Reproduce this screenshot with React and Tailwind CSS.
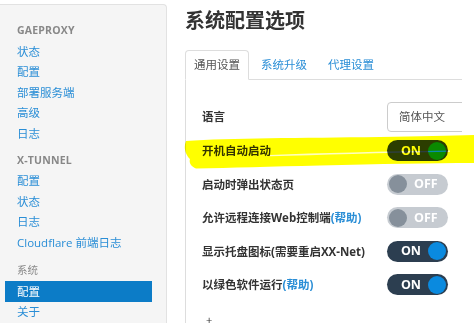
import React from "react";

const FONT = { fontFamily: '"Open Sans", "Noto Sans CJK SC", sans-serif' };

function SideItem({ children, active }) {
  return (
    <div
      className={
        "h-[20.5px] mx-[5px] w-[147px] px-[12px] flex items-center text-[11.5px] " +
        (active ? "bg-[#0c7cc7] text-white" : "text-[#2a8ed6]")
      }
    >
      {children}
    </div>
  );
}

function Toggle({ on }) {
  if (on) {
    return (
      <div className="w-[61px] h-[21px] shrink-0 rounded-full bg-[#2c3e50] flex items-center justify-end pr-[2px] gap-[7px]">
        <span className="text-white font-bold text-[12.5px] leading-none">ON</span>
        <span className="w-[18px] h-[18px] rounded-full bg-[#0a8adf]" />
      </div>
    );
  }
  return (
    <div className="w-[61px] h-[21px] shrink-0 rounded-full bg-[#c6cbd1] flex items-center pl-[2px] gap-[7px]">
      <span className="w-[18px] h-[18px] rounded-full bg-[#86909b]" />
      <span className="text-white font-bold text-[12.5px] leading-none">OFF</span>
    </div>
  );
}

function Row({ label, children, h = "h-[33.5px]" }) {
  return (
    <div className={"flex items-center " + h}>
      <div className="w-[185px] shrink-0 text-[11.5px] font-bold text-[#333]">{label}</div>
      {children}
    </div>
  );
}

const Help = () => <span className="text-[#2a8ed6]">(帮助)</span>;

export default function App() {
  return (
    <div
      className="relative flex w-[474px] h-[323px] overflow-hidden bg-white"
      style={FONT}
    >
      <aside className="w-[167px] shrink-0 mt-[4px] bg-[#f5f5f5] border-t border-r border-[#e2e2e2] rounded-tr-[4px] pt-[16px]">
        <div className="h-[20px] flex items-center pl-[17px] text-[10.5px] font-bold text-[#888] tracking-[0.2px]">
          GAEPROXY
        </div>
        <SideItem>状态</SideItem>
        <SideItem>配置</SideItem>
        <SideItem>部署服务端</SideItem>
        <SideItem>高级</SideItem>
        <SideItem>日志</SideItem>
        <div className="mt-[7px] h-[20px] flex items-center pl-[17px] text-[10.5px] font-bold text-[#888] tracking-[0.2px]">
          X-TUNNEL
        </div>
        <SideItem>配置</SideItem>
        <SideItem>状态</SideItem>
        <SideItem>日志</SideItem>
        <SideItem>Cloudflare 前端日志</SideItem>
        <div className="mt-[8.5px] h-[20px] flex items-center pl-[17px] text-[10.5px] text-[#888]">
          系统
        </div>
        <SideItem active>配置</SideItem>
        <SideItem>关于</SideItem>
      </aside>

      <main className="w-[295px] shrink-0 pl-[18px] pt-[9px] overflow-hidden">
        <h1 className="text-[20px] leading-[24px] font-bold text-[#333]">系统配置选项</h1>
        <div className="mt-[17px] flex h-[30px] border-b border-[#ddd] text-[11.5px]">
          <div className="h-[30px] px-[8px] flex items-center border border-[#ddd] border-b-white rounded-t-[4px] bg-white text-[#555] mr-[2px]">
            通用设置
          </div>
          <div className="h-[29px] px-[10px] flex items-center text-[#2a8ed6]">系统升级</div>
          <div className="h-[29px] px-[11px] flex items-center text-[#2a8ed6]">代理设置</div>
        </div>
        <div className="border-l border-[#ddd] pl-[16px] pt-[20px] h-[260px]">
          <Row label="语言" h="h-[34px]">
            <div className="w-[120px] h-[30px] shrink-0 border border-[#ccc] rounded-[4px] flex items-center pl-[11px] text-[11.5px] text-[#555]">
              简体中文
            </div>
          </Row>
          <Row label="开机自动启动">
            <Toggle on />
          </Row>
          <Row label="启动时弹出状态页">
            <Toggle />
          </Row>
          <Row label={<>允许远程连接Web控制端<Help /></>}>
            <Toggle />
          </Row>
          <Row label="显示托盘图标(需要重启XX-Net)">
            <Toggle on />
          </Row>
          <Row label={<>以绿色软件运行<Help /></>}>
            <Toggle on />
          </Row>
          <div className="h-[20px] pl-[4px] pt-[12px] text-[11px] text-[#333] leading-none">+</div>
        </div>
      </main>

      <svg
        className="absolute left-0 top-0 pointer-events-none mix-blend-multiply"
        width="474"
        height="323"
        viewBox="0 0 474 323"
      >
        <path
          d="M186 141 C 230 138, 300 138, 380 137 C 420 136, 450 136, 474 135 L 474 163 C 430 163, 380 164, 320 165.5 C 270 166.5, 230 168, 196 168.5 C 190 166, 189 162, 190 159 C 186 155, 183 148, 186 141 Z"
          fill="#ffff00"
        />
        <path
          d="M270 155 C 320 153, 380 151.5, 450 150.5 L 450 151.8 C 380 153, 320 155, 270 156.2 Z"
          fill="#fffff0"
          opacity="0.8"
        />
      </svg>
    </div>
  );
}
